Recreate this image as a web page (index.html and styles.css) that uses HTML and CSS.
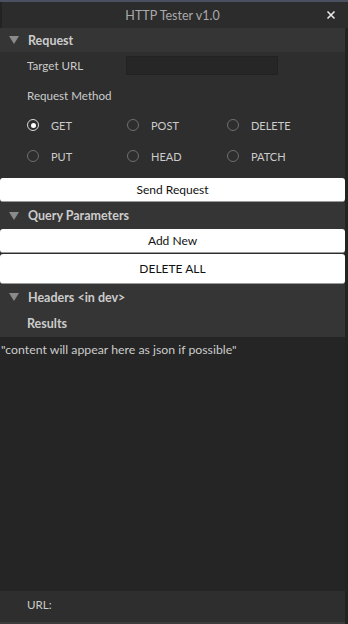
FILE: index.html
```html
<!DOCTYPE html>
<html>
<head>
<meta charset="utf-8">
<link rel="stylesheet" href="styles.css">
</head>
<body>
<div class="window">
  <div class="topline"></div>
  <div class="titlebar">
    <span class="title">HTTP Tester v1.0</span>
    <span class="close">
      <svg width="10" height="10" viewBox="0 0 10 10"><path d="M1.5 1.5 L8.5 8.5 M8.5 1.5 L1.5 8.5" stroke="#e8e8e8" stroke-width="1.6"/></svg>
    </span>
  </div>
  <div class="main">
    <div class="section-head"><span class="tri"></span>Request</div>
    <div class="body">
      <div class="row url-row">
        <span class="label">Target URL</span>
        <span class="input"></span>
      </div>
      <div class="row method-row"><span class="label">Request Method</span></div>
      <div class="radios">
        <div class="radio"><span class="dot on"></span>GET</div>
        <div class="radio"><span class="dot"></span>POST</div>
        <div class="radio"><span class="dot"></span>DELETE</div>
        <div class="radio"><span class="dot"></span>PUT</div>
        <div class="radio"><span class="dot"></span>HEAD</div>
        <div class="radio"><span class="dot"></span>PATCH</div>
      </div>
    </div>
    <div class="btn btn-send">Send Request</div>
    <div class="section-head qp"><span class="tri"></span>Query Parameters</div>
    <div class="btn btn-add">Add New</div>
    <div class="btn btn-del">DELETE ALL</div>
    <div class="section-head hd"><span class="tri"></span>Headers &lt;in dev&gt;</div>
    <div class="section-head res"><span class="notri"></span>Results</div>
    <div class="results">"content will appear here as json if possible"</div>
    <div class="urlbar"><span class="label">URL:</span></div>
  </div>
</div>
</body>
</html>
```
FILE: styles.css
```css
html, body {
  margin: 0;
  padding: 0;
  background: #2e2e2e;
}
.window {
  width: 348px;
  height: 624px;
  display: flex;
  flex-direction: column;
  font-family: "Lato", "Open Sans", sans-serif;
  color: #cccccc;
  overflow: hidden;
}
.topline {
  height: 2px;
  background: #4b5061;
  flex: none;
}
.titlebar {
  height: 26px;
  flex: none;
  background: #2c2c2c;
  display: flex;
  align-items: center;
  justify-content: center;
  position: relative;
  border-left: 2px solid #232323;
  padding-right: 5px;
}
.title {
  font-size: 12.5px;
  color: #aaaaaa;
}
.close {
  position: absolute;
  right: 12px;
  top: 8px;
  width: 10px;
  height: 10px;
  display: flex;
}
.main {
  flex: 1;
  display: flex;
  flex-direction: column;
  border-right: 3px solid #232323;
}
.section-head {
  height: 24px;
  flex: none;
  background: #353535;
  display: flex;
  align-items: center;
  font-weight: bold;
  font-size: 12.5px;
  color: #cccccc;
}
.tri {
  width: 0;
  height: 0;
  border-left: 5px solid transparent;
  border-right: 5px solid transparent;
  border-top: 8px solid #8a8a8a;
  margin-left: 9px;
  margin-right: 9px;
}
.notri {
  width: 27px;
}
.body {
  background: #2e2e2e;
  padding: 3px 0 12px 0;
}
.row {
  display: flex;
  align-items: center;
}
.label {
  padding-left: 27px;
  font-size: 11.6px;
}
.url-row {
  height: 20px;
}
.url-row .label {
  width: 126px;
  box-sizing: border-box;
  flex: none;
}
.input {
  width: 152px;
  height: 19px;
  background: #262626;
  border: 1px solid #222222;
  box-sizing: border-box;
}
.method-row {
  height: 20px;
  margin-top: 10px;
}
.radios {
  display: grid;
  grid-template-columns: 100px 100px 100px;
  row-gap: 11px;
  padding-left: 27px;
  margin-top: 10px;
}
.radio {
  display: flex;
  align-items: center;
  height: 20px;
  font-size: 11px;
  color: #cccccc;
}
.dot {
  width: 12px;
  height: 12px;
  border: 1px solid #6f6f6f;
  border-radius: 50%;
  margin-right: 12px;
  box-sizing: border-box;
  display: flex;
  align-items: center;
  justify-content: center;
}
.dot.on {
  border-color: #d8d8d8;
}
.dot.on::after {
  content: "";
  width: 5px;
  height: 5px;
  border-radius: 50%;
  background: #ffffff;
}
.btn {
  flex: none;
  background: #ffffff;
  color: #111111;
  font-size: 12px;
  display: flex;
  align-items: center;
  justify-content: center;
  border-radius: 3px;
  border-bottom: 1px solid #9a9a9a;
  box-sizing: border-box;
}
.btn-send {
  height: 24px;
}
.qp {
  height: 27px;
}
.btn-add {
  height: 24px;
}
.btn-del {
  height: 30px;
  margin-top: 1px;
}
.hd {
  height: 26px;
}
.res {
  height: 27px;
}
.results {
  flex: 1;
  background: #252525;
  font-size: 12.3px;
  padding: 5px 0 0 1px;
  color: #cccccc;
}
.urlbar {
  flex: none;
  height: 33px;
  background: #2e2e2e;
  display: flex;
  align-items: center;
  padding-bottom: 4px;
  box-sizing: border-box;
  border-bottom: 2px solid #3c3c3c;
}
```
